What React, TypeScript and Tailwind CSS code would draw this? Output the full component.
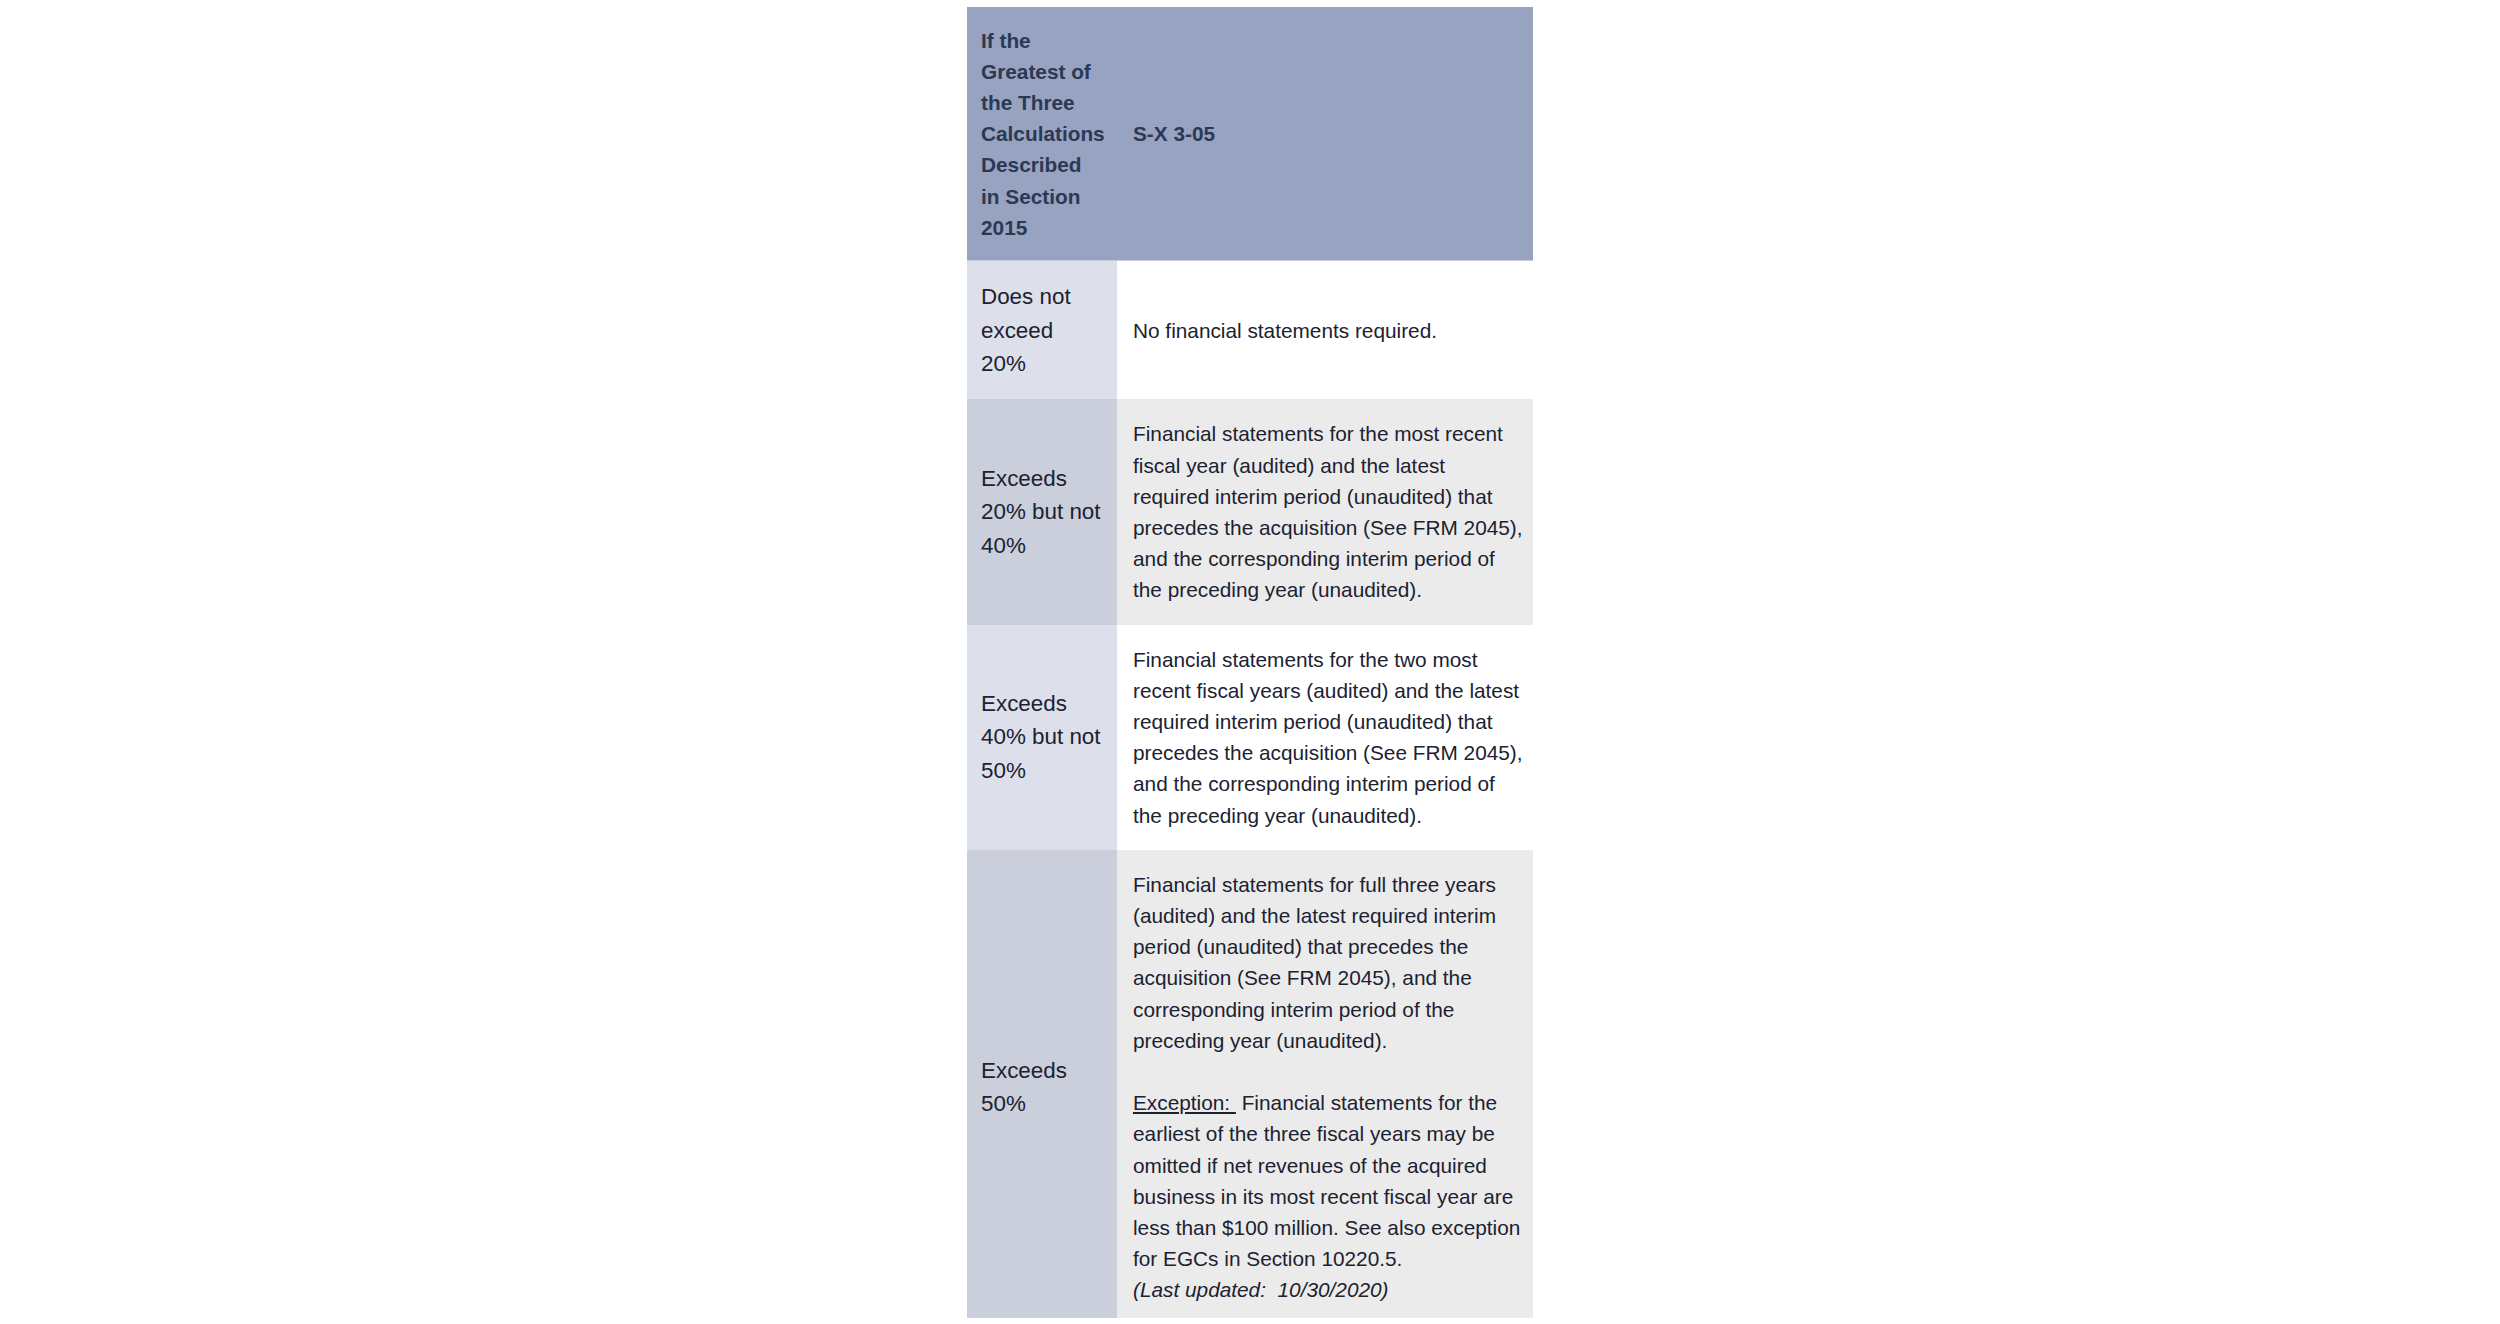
import React from "react";

type Row = {
  label: string[];
  body: React.ReactNode;
  even: boolean;
  pad: string;
};

const Lines = ({ lines }: { lines: string[] }) => (
  <>
    {lines.map((l, i) => (
      <span key={i} className="block whitespace-pre">
        {l}
      </span>
    ))}
  </>
);

export default function App() {
  const rows: Row[] = [
    {
      label: ["Does not", "exceed", "20%"],
      body: <Lines lines={["No financial statements required."]} />,
      even: false,
      pad: "py-[18.6px]",
    },
    {
      label: ["Exceeds", "20% but not", "40%"],
      body: (
        <Lines
          lines={[
            "Financial statements for the most recent",
            "fiscal year (audited) and the latest",
            "required interim period (unaudited) that",
            "precedes the acquisition (See FRM 2045),",
            "and the corresponding interim period of",
            "the preceding year (unaudited).",
          ]}
        />
      ),
      even: true,
      pad: "py-[19px]",
    },
    {
      label: ["Exceeds", "40% but not", "50%"],
      body: (
        <Lines
          lines={[
            "Financial statements for the two most",
            "recent fiscal years (audited) and the latest",
            "required interim period (unaudited) that",
            "precedes the acquisition (See FRM 2045),",
            "and the corresponding interim period of",
            "the preceding year (unaudited).",
          ]}
        />
      ),
      even: false,
      pad: "py-[19px]",
    },
    {
      label: ["Exceeds", "50%"],
      body: (
        <>
          <Lines
            lines={[
              "Financial statements for full three years",
              "(audited) and the latest required interim",
              "period (unaudited) that precedes the",
              "acquisition (See FRM 2045), and the",
              "corresponding interim period of the",
              "preceding year (unaudited).",
              " ",
            ]}
          />
          <span className="block whitespace-pre">
            <span className="underline">Exception: </span> Financial statements for the
          </span>
          <Lines
            lines={[
              "earliest of the three fiscal years may be",
              "omitted if net revenues of the acquired",
              "business in its most recent fiscal year are",
              "less than $100 million. See also exception",
              "for EGCs in Section 10220.5.",
            ]}
          />
          <span className="block whitespace-pre italic">(Last updated:  10/30/2020)</span>
        </>
      ),
      even: true,
      pad: "pt-[19px] pb-[12px]",
    },
  ];

  return (
    <div
      className="min-h-screen w-full bg-white pt-[7px]"
      style={{ fontFamily: '"Liberation Sans", Arial, Helvetica, sans-serif' }}
    >
      <div className="mx-auto grid w-[566px] grid-cols-[150px_416px] text-[20.8px] leading-[31.2px] text-[#1b2231]">
        {/* Header */}
        <div className="flex items-center bg-[#98a2c1] py-[17.5px] pl-[14px] pr-[6px] font-bold text-[#2b3954]">
          <div>
            <Lines
              lines={[
                "If the",
                "Greatest of",
                "the Three",
                "Calculations",
                "Described",
                "in Section",
                "2015",
              ]}
            />
          </div>
        </div>
        <div className="flex items-center bg-[#98a2c1] py-[17.5px] pl-[16px] pr-[10px] font-bold text-[#2b3954]">
          <div>S-X 3-05</div>
        </div>
        <div className="col-span-2 h-px bg-[#c3c9dc]" />

        {rows.map((r, i) => (
          <React.Fragment key={i}>
            <div
              className={`flex items-center ${r.pad} pl-[14px] pr-[4px] text-[22.4px] leading-[33.6px] ${
                r.even ? "bg-[#cbcedb]" : "bg-[#dde0ea]"
              }`}
            >
              <div>
                <Lines lines={r.label} />
              </div>
            </div>
            <div
              className={`flex items-center ${r.pad} pl-[16px] pr-[10px] ${
                r.even ? "bg-[#ebebeb]" : "bg-white"
              }`}
            >
              <div>{r.body}</div>
            </div>
          </React.Fragment>
        ))}
      </div>
    </div>
  );
}
